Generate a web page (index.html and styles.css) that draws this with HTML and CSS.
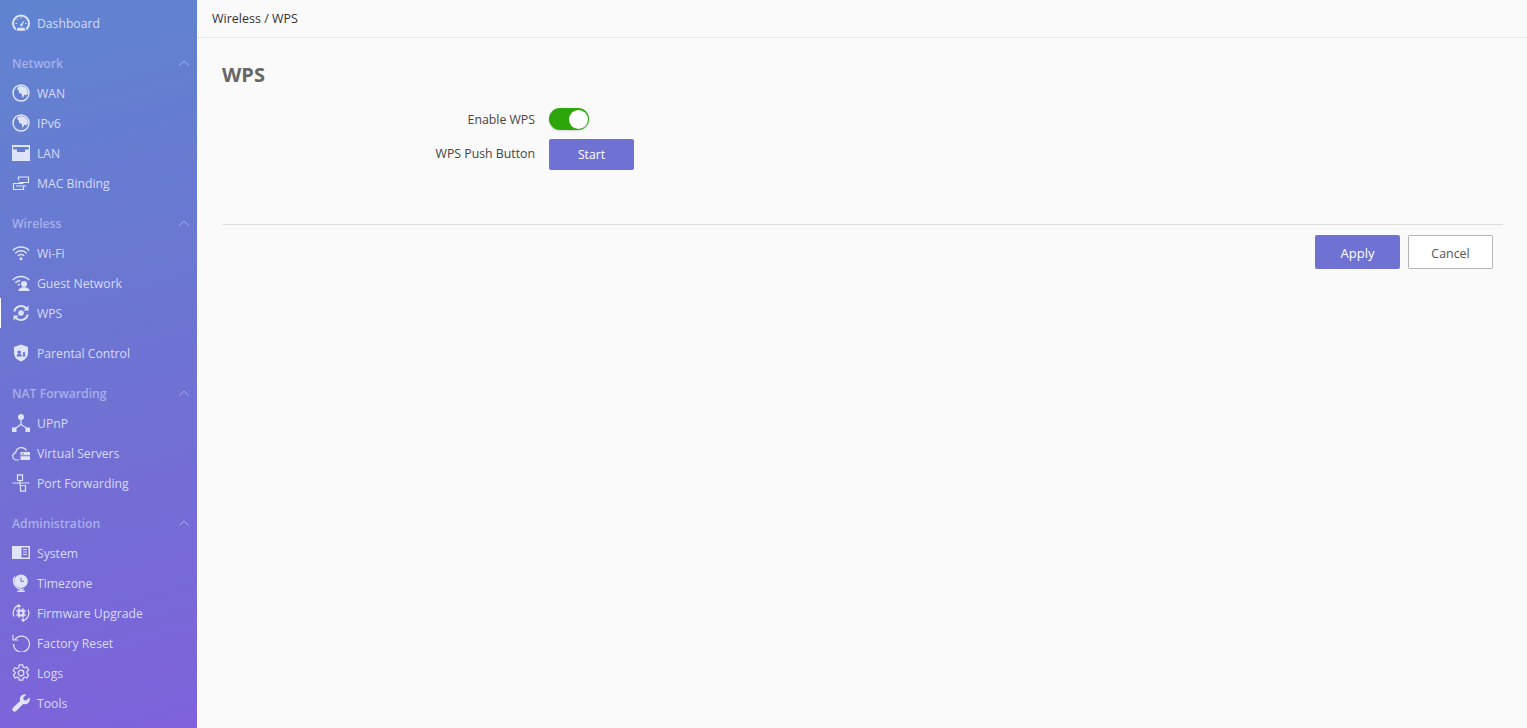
FILE: index.html
```html
<!DOCTYPE html>
<html lang="en">
<head>
<meta charset="utf-8">
<title>WPS</title>
<link rel="stylesheet" href="styles.css">
</head>
<body>
<div class="app">
<nav class="sidebar">
  <div class="group">
    <a class="item"><svg class="icon" viewBox="0 0 18 18"><path class="line wide" d="M3.700 15.500A8 8 0 1 1 14.300 15.500"/><path class="solid" d="M4.500 16.800h9l-1-3h-7zM7.800 11.600l5-5.800-2.800 6.800z"/><path class="line thin" d="M3.500 9.500h1.500M5 5l1 1M9 3.200v1.500M14.500 9.500H13"/></svg><span>Dashboard</span></a>
  </div>
  <div class="group">
    <div class="section"><span>Network</span><svg class="chev" viewBox="0 0 10 6"><path d="M.5 5.500L5 1l4.500 4.500"/></svg></div>
    <a class="item"><svg class="icon" viewBox="0 0 18 18"><circle class="line med" cx="9" cy="9" r="8"/><path class="solid" d="M6.500 2.500C9 1.800 12 2.200 13.800 4c1.500 1.500 2.200 3.500 2 5.500l-1.300 1.800-2.300-.6-1.200 3-.8-.5-.4-3.200-2.800-1.200-.4-2.600-1.600-1.200z"/></svg><span>WAN</span></a>
    <a class="item"><svg class="icon" viewBox="0 0 18 18"><circle class="line med" cx="9" cy="9" r="8"/><path class="solid" d="M6.500 2.500C9 1.800 12 2.200 13.800 4c1.500 1.500 2.200 3.500 2 5.500l-1.300 1.800-2.300-.6-1.200 3-.8-.5-.4-3.200-2.800-1.200-.4-2.600-1.600-1.200z"/></svg><span>IPv6</span></a>
    <a class="item"><svg class="icon" viewBox="0 0 18 18"><path class="solid" d="M0 1h18v16H0zM1.200 3v2.500h3.800V8h8V5.500h3.800V3z" fill-rule="evenodd"/></svg><span>LAN</span></a>
    <a class="item"><svg class="icon" viewBox="0 0 18 18"><path class="line" d="M6.500 8.500H16.500V3H6.500V6M11.500 9.500H1.500V15.500H11.500V12M4 12H14"/></svg><span>MAC Binding</span></a>
  </div>
  <div class="group">
    <div class="section"><span>Wireless</span><svg class="chev" viewBox="0 0 10 6"><path d="M.5 5.500L5 1l4.500 4.500"/></svg></div>
    <a class="item"><svg class="icon" viewBox="0 0 18 18"><path class="line med" d="M.8 6.500a11.600 11.600 0 0 1 16.400 0M3.300 9.200a8 8 0 0 1 11.400 0M5.800 11.800a4.500 4.500 0 0 1 6.400 0"/><circle class="solid" cx="9" cy="14.700" r="1.500"/></svg><span>Wi-Fi</span></a>
    <a class="item"><svg class="icon" viewBox="0 0 18 18"><path class="line med" d="M.8 6a11.600 11.600 0 0 1 16.400 0M3.300 8.800a8 8 0 0 1 5-2.300M5.800 11.300a4.500 4.500 0 0 1 2-1.100"/><circle class="solid" cx="12" cy="10" r="3"/><path class="solid" d="M6.500 17c0-2.500 2.500-3.700 5.500-3.700s5.500 1.200 5.500 3.700z"/></svg><span>Guest Network</span></a>
    <a class="item active"><svg class="icon" viewBox="0 0 18 18"><path class="line wide" d="M2.300 7.500A7 7 0 0 1 14.500 4.500M15.700 10.500A7 7 0 0 1 3.500 13.500"/><path class="solid" d="M16.500 1.500v5h-5zM1.500 16.500v-5h5z"/><circle class="solid" cx="9" cy="9" r="2.800"/></svg><span>WPS</span></a>
  </div>
  <div class="group">
    <a class="item"><svg class="icon" viewBox="0 0 18 18"><path class="solid" fill-rule="evenodd" d="M9 .5l7 2.500v6c0 4-3 7-7 8.500-4-1.500-7-4.500-7-8.500V3zM7.200 6.500a1.700 1.700 0 1 0 .01 0zM12 8a1.300 1.300 0 1 0 .01 0zM4.700 12.500h5c0-2-1-3-2.500-3s-2.500 1-2.500 3zM10.500 12.500h3c0-1.600-.7-2-1.500-2-.7 0-1.200.2-1.500.6z"/></svg><span>Parental Control</span></a>
  </div>
  <div class="group">
    <div class="section"><span>NAT Forwarding</span><svg class="chev" viewBox="0 0 10 6"><path d="M.5 5.500L5 1l4.500 4.500"/></svg></div>
    <a class="item"><svg class="icon" viewBox="0 0 18 18"><circle class="solid" cx="9" cy="3" r="3"/><path class="solid" d="M0 13.500h4.500V18H0zM13.500 13.500H18V18h-4.500z"/><path class="line" d="M9 5v5.500M9 10.500l-6 4M9 10.500l6 4"/></svg><span>UPnP</span></a>
    <a class="item"><svg class="icon" viewBox="0 0 18 18"><path class="line" d="M7 16H4.500a3.700 3.700 0 0 1-.8-7.300A5.800 5.800 0 0 1 14.500 6.500"/><path class="solid" fill-rule="evenodd" d="M8.500 8H18v3.300H8.500zM8.500 12.300H18V16H8.500zM10 9.200v1h2v-1z"/></svg><span>Virtual Servers</span></a>
    <a class="item"><svg class="icon" viewBox="0 0 18 18"><path class="line" d="M5.500 .8H10.500V6.500H5.500zM8.500 11.500H13.500V17.200H8.500zM8 6.500V11.500M.5 9H17.500"/></svg><span>Port Forwarding</span></a>
  </div>
  <div class="group">
    <div class="section"><span>Administration</span><svg class="chev" viewBox="0 0 10 6"><path d="M.5 5.500L5 1l4.500 4.500"/></svg></div>
    <a class="item"><svg class="icon" viewBox="0 0 18 18"><path class="solid" fill-rule="evenodd" d="M0 2h18v13H0zM9.500 3.500v10h7v-10zM11 5h4v1h-4zM11 7.500h4v1h-4zM11 10h4v1h-4z"/></svg><span>System</span></a>
    <a class="item"><svg class="icon" viewBox="0 0 18 18"><path class="solid" fill-rule="evenodd" d="M9 .5a6.800 6.800 0 1 1 0 13.600A6.800 6.800 0 0 1 9 .5zM8.500 3.500v4.300h3.500v-1H9.500V3.500z"/><path class="line" d="M2.700 2.500a8.500 8.500 0 0 0 9.500 12.500"/><path class="solid" d="M8.300 15h1.400v1.500h3V18h-7.400v-1.500h3z"/></svg><span>Timezone</span></a>
    <a class="item"><svg class="icon" viewBox="0 0 18 18"><path class="line" d="M2 12.500A8 8 0 0 1 7.500 1.200M16 5.500A8 8 0 0 1 10.500 16.800"/><path class="solid" d="M6 0l3.300 2.200L6.300 4zM12 18l-3.300-2.200 3-1.800z"/><path class="solid" fill-rule="evenodd" d="M5.500 5.500h7v7h-7zM7.500 7.500v3h3v-3z"/><path class="line thin" d="M7 4v10M11 4v10M4 7h10M4 11h10"/></svg><span>Firmware Upgrade</span></a>
    <a class="item"><svg class="icon" viewBox="0 0 18 18"><path class="line" d="M3 5.500A8 8 0 1 1 1.500 10M1 1v5h5"/></svg><span>Factory Reset</span></a>
    <a class="item"><svg class="icon" viewBox="0 0 18 18"><path class="line" d="M7.300 .8h3.400l.5 2.300 1.500.8 2.200-.8 1.700 2.900-1.700 1.600v1.800l1.700 1.600-1.700 2.900-2.200-.8-1.500.8-.5 2.300H7.300l-.5-2.300-1.500-.8-2.200.8-1.700-2.900 1.700-1.600V8.200L1.200 6.600 2.900 3.700l2.200.8 1.500-.8z"/><circle class="line" cx="9" cy="9" r="2.800"/></svg><span>Logs</span></a>
    <a class="item"><svg class="icon" viewBox="0 0 18 18"><path class="solid" d="M17.500 3.500l-3.300 3-2.400-.5-.6-2.400L14.400.5a5 5 0 0 0-6.300 6.400L1 13.700a2.300 2.300 0 0 0 3.200 3.300l7-7a5 5 0 0 0 6.300-6.500z"/></svg><span>Tools</span></a>
  </div>
</nav>
<main class="main">
  <header class="crumb">Wireless / WPS</header>
  <section class="content">
    <h1 class="title">WPS</h1>
    <div class="form">
      <div class="row row-switch">
        <label class="label">Enable WPS</label>
        <span class="switch"><span class="knob"></span></span>
      </div>
      <div class="row row-start">
        <label class="label label-push">WPS Push Button</label>
        <button class="btn btn-start">Start</button>
      </div>
    </div>
    <div class="actions">
      <button class="btn btn-apply">Apply</button>
      <button class="btn btn-cancel">Cancel</button>
    </div>
  </section>
</main>
</div>
</body>
</html>
```
FILE: styles.css
```css
* { box-sizing: border-box; }
html, body { margin: 0; height: 100%; }
body { font-family: "Open Sans", "Noto Sans", sans-serif; font-size: 12.2px; color: #333; background: #fafafa; overflow: hidden; }
.app { display: flex; height: 728px; }
.sidebar { width: 197px; flex: none; padding-top: 8px; background: linear-gradient(165deg, #6084d0 0%, #6c75d2 45%, #7e62da 100%); color: #dfe1f8; }
.group { margin-bottom: 10px; }
.item { position: relative; display: flex; align-items: center; gap: 7px; height: 30px; padding-left: 12px; color: #d8dbf6; }
.item.active::before { content: ""; position: absolute; left: 0; top: 0; width: 1px; height: 30px; background: #fff; }
.icon { width: 18px; height: 18px; flex: none; }
.solid { fill: #dfe4f8; }
.line { fill: none; stroke: #dfe4f8; stroke-width: 1.200; }
.line.thin { stroke-width: 1; }
.line.med { stroke-width: 1.500; }
.line.wide { stroke-width: 2; }
.section { display: flex; align-items: center; justify-content: space-between; height: 30px; padding: 0 8px 0 12px; font-size: 12.2px; font-weight: 600; color: #a7b0e8; }
.chev { width: 10px; height: 6px; fill: none; stroke: #a7b0e8; stroke-width: 1; }
.main { flex: 1; min-width: 0; }
.crumb { height: 38px; padding: 0 15px; line-height: 37px; font-size: 12.5px; color: #333; border-bottom: 1px solid #e8e8e8; }
.content { padding: 0 24px 0 25px; }
.title { margin: 0; padding-top: 23px; height: 70px; font-size: 20px; line-height: 28px; font-weight: 700; color: #666; }
.form { height: 117px; border-bottom: 1px solid #ddd; }
.row { display: flex; align-items: center; gap: 14px; }
.row-switch { height: 22px; }
.row-start { height: 31px; margin-top: 9px; }
.label { width: 313px; text-align: right; font-size: 12.3px; color: #444; }
.label-push { padding-bottom: 2px; }
.switch { display: flex; justify-content: flex-end; align-items: center; width: 40px; height: 22px; padding: 0 1px; border-radius: 11px; background: #2ca60b; box-shadow: 0 1px 2px rgba(0,0,0,.15); }
.knob { width: 19px; height: 19px; border-radius: 50%; background: #fff; }
.btn { font-family: inherit; font-size: 13px; border-radius: 2px; border: 1px solid transparent; padding: 0; }
.btn-start, .btn-apply { background: #6f72d2; color: #fff; }
.btn-start { width: 85px; height: 31px; font-size: 12.2px; }
.actions { display: flex; justify-content: flex-end; gap: 8px; padding: 10px 10px 0 0; }
.btn-apply { width: 85px; height: 34px; padding-top: 2px; }
.btn-cancel { width: 85px; height: 34px; padding-top: 2px; font-size: 12.4px; background: #fff; color: #555; border-color: #b5b5b5; }
```
